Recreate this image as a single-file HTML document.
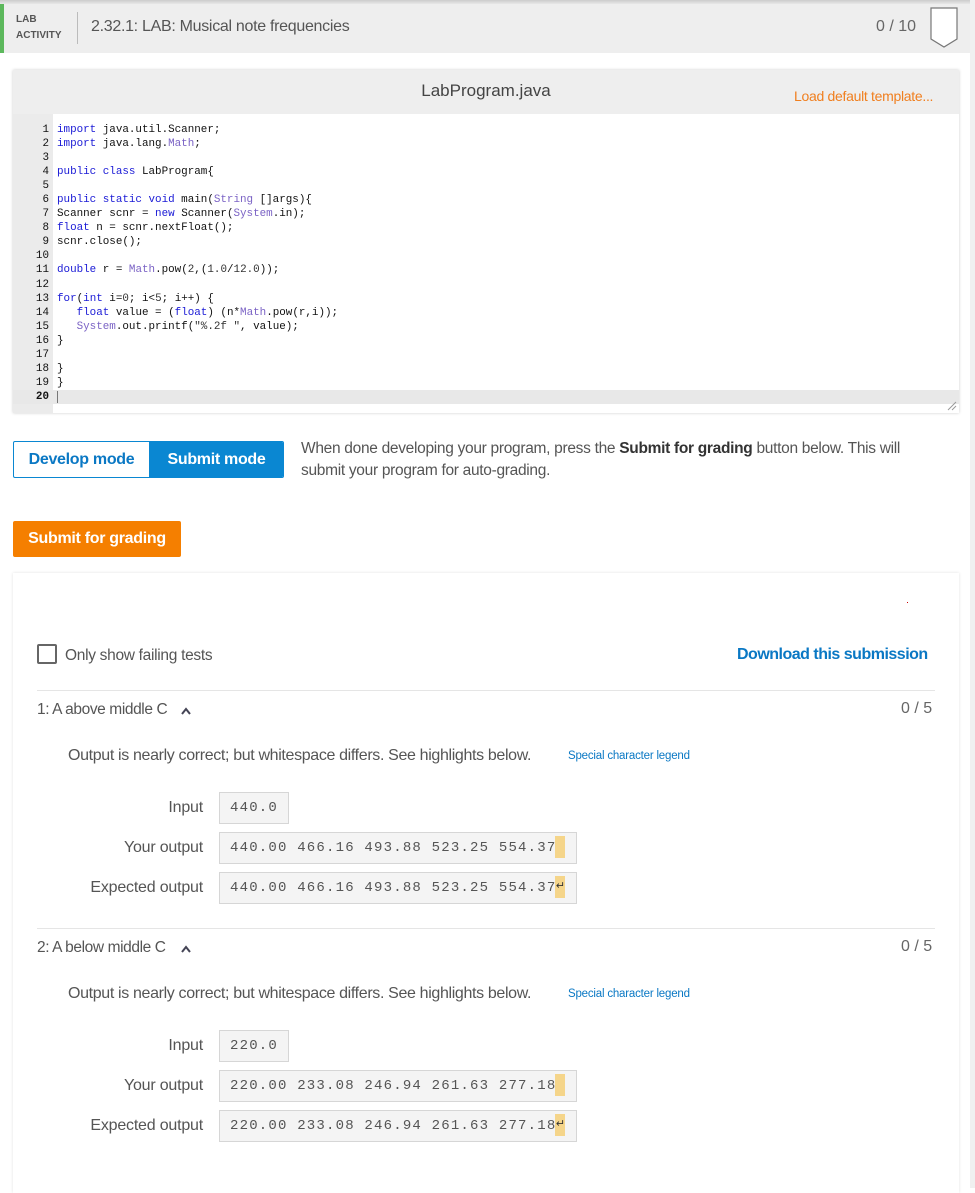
<!DOCTYPE html>
<html><head><meta charset="utf-8"><style>
*{box-sizing:border-box;margin:0;padding:0}
body{width:975px;height:1188px;background:#fff;font-family:"Liberation Sans",sans-serif;color:#444;position:relative;overflow:hidden}
.abs{position:absolute}
.hdr{left:0;top:4px;width:970px;height:49px;background:#eeeeee;border-left:4px solid #5cb85c}
.shadowtop{left:0;top:0;width:975px;height:5px;background:linear-gradient(#ccc,#eee)}
.rstrip{left:970px;top:0;width:5px;height:1188px;background:#f0f0f0}
.code{left:13px;top:70px;width:946px;height:343px;background:#fff;box-shadow:0 0 3px rgba(0,0,0,.2)}
.codehd{left:0;top:0;width:946px;height:44px;background:#eeeeee}
.gut{left:0;top:44px;width:40px;height:299px;background:#ebebeb}
pre{font-family:"Liberation Mono",monospace;font-size:10.9px;line-height:14.05px;color:#111}
.k{color:#1a1ad6}.m{color:#333}.n{color:#7b63c5}
.btn{font-weight:bold;font-size:16px;letter-spacing:-.3px}
.box{position:absolute;background:#f4f4f4;border:1px solid #d6d6d6;font-family:"Liberation Mono",monospace;font-size:14px;letter-spacing:1.2px;color:#555;padding:0 10px;height:32px;line-height:30px;white-space:nowrap}
.lbl{position:absolute;font-size:16px;color:#555;text-align:right;width:170px;letter-spacing:-.2px}
.hl{display:inline-block;background:#f5d58a;width:10px;height:22px;vertical-align:middle;margin-left:-1px;color:#333;font-size:11px;line-height:22px;letter-spacing:0;text-align:center}
</style></head><body>
<div class="abs shadowtop"></div>
<div class="abs rstrip"></div>
<div class="abs hdr">
 <div class="abs" style="left:12px;top:8px;font-size:10px;font-weight:bold;color:#555;line-height:16px">LAB<br>ACTIVITY</div>
 <div class="abs" style="left:73px;top:8px;width:1px;height:32px;background:#bbb"></div>
 <div class="abs" style="left:87px;top:14px;font-size:16px;color:#555;letter-spacing:-.3px">2.32.1: LAB: Musical note frequencies</div>
 <div class="abs" style="left:872px;top:14px;font-size:16px;color:#666">0 / 10</div>
 <svg class="abs" style="left:926px;top:3px" width="46" height="42"><path d="M1 1 H27 V32 L14 40 L1 32 Z" fill="#fff" stroke="#777" stroke-width="1.2"/></svg>
</div>
<div class="abs code">
 <div class="abs codehd"><div class="abs" style="left:0;width:946px;text-align:center;top:11px;font-size:17px;color:#444">LabProgram.java</div>
 <div class="abs" style="left:781px;top:18px;font-size:14px;color:#f07f1f;letter-spacing:-.3px">Load default template...</div></div>
 <div class="abs gut"></div>
 <div class="abs" style="left:0;top:320px;width:946px;height:14px;background:#e8e8e8"></div>
 <div class="abs" style="left:44px;top:321px;width:1px;height:12px;background:#777"></div>
 <pre class="abs" style="left:0;top:53px;width:36px;text-align:right">1
2
3
4
5
6
7
8
9
10
11
12
13
14
15
16
17
18
19
<b>20</b></pre>
 <pre class="abs" style="left:44px;top:53px"><span class="k">import</span> java.util.Scanner;
<span class="k">import</span> java.lang.<span class="n">Math</span>;

<span class="k">public class</span> LabProgram{

<span class="k">public static void</span> main(<span class="n">String</span> []args){
Scanner scnr = <span class="k">new</span> Scanner(<span class="n">System</span>.in);
<span class="k">float</span> n = scnr.nextFloat();
scnr.close();

<span class="k">double</span> r = <span class="n">Math</span>.pow(<span class="m">2</span>,(<span class="m">1.0</span>/<span class="m">12.0</span>));

<span class="k">for</span>(<span class="k">int</span> i=<span class="m">0</span>; i&lt;<span class="m">5</span>; i++) {
   <span class="k">float</span> value = (<span class="k">float</span>) (n*<span class="n">Math</span>.pow(r,i));
   <span class="n">System</span>.out.printf(<span class="m">"%.2f "</span>, value);
}

}
}
</pre>
 <svg class="abs" style="left:934px;top:331px" width="10" height="10"><path d="M9 1 L1 9 M9 5 L5 9" stroke="#999"/></svg>
</div>
<div class="abs" style="left:13px;top:441px;width:271px;height:37px;border:1px solid #0a87d2;border-radius:2px;overflow:hidden">
 <div class="abs btn" style="left:0;top:0;width:135px;height:35px;color:#0a78c4;text-align:center;line-height:35px">Develop mode</div>
 <div class="abs btn" style="left:135px;top:0;width:135px;height:35px;background:#0a87d2;color:#fff;text-align:center;line-height:35px">Submit mode</div>
</div>
<div class="abs" style="left:301px;top:438px;width:630px;font-size:15.5px;line-height:22px;color:#555;letter-spacing:-.3px">When done developing your program, press the <b style="color:#333">Submit for grading</b> button below. This will submit your program for auto-grading.</div>
<div class="abs btn" style="left:13px;top:521px;width:168px;height:36px;background:#f57f00;color:#fff;text-align:center;line-height:36px;border-radius:2px">Submit for grading</div>
<div class="abs" style="left:13px;top:573px;width:946px;height:620px;background:#fff;box-shadow:0 0 3px rgba(0,0,0,.12)"></div>
<div class="abs" style="left:907px;top:602px;width:1px;height:1px;background:#c00"></div>
<div class="abs" style="left:37px;top:644px;width:20px;height:20px;border:2px solid #666;border-radius:2px"></div>
<div class="abs" style="left:65px;top:647px;font-size:15.5px;color:#555;letter-spacing:-.3px">Only show failing tests</div>
<div class="abs" style="left:737px;top:646px;font-size:16px;font-weight:bold;color:#0a78c4;letter-spacing:-.5px">Download this submission</div>

<div class="abs" style="left:37px;top:690px;width:898px;height:1px;background:#e5e5e5"></div>
<div class="abs" style="left:37px;top:701px;font-size:15.5px;color:#555;letter-spacing:-.4px">1: A above middle C</div>
<svg class="abs" style="left:180px;top:706px" width="12" height="10"><path d="M2 8 L6 3 L10 8" fill="none" stroke="#445" stroke-width="2"/></svg>
<div class="abs" style="left:901px;top:700px;font-size:16px;color:#666">0 / 5</div>
<div class="abs" style="left:68px;top:747px;font-size:16px;color:#555;letter-spacing:-.35px">Output is nearly correct; but whitespace differs. See highlights below.</div>
<div class="abs" style="left:568px;top:750px;font-size:11.5px;color:#0a78c4;letter-spacing:-.2px">Special character legend</div>
<div class="lbl" style="left:33px;top:799px">Input</div>
<div class="box" style="left:219px;top:792px;width:70px">440.0</div>
<div class="lbl" style="left:33px;top:839px">Your output</div>
<div class="box" style="left:219px;top:832px;width:358px">440.00 466.16 493.88 523.25 554.37<span class="hl"></span></div>
<div class="lbl" style="left:33px;top:879px">Expected output</div>
<div class="box" style="left:219px;top:872px;width:358px">440.00 466.16 493.88 523.25 554.37<span class="hl">&#8629;</span></div>

<div class="abs" style="left:37px;top:928px;width:898px;height:1px;background:#e5e5e5"></div>
<div class="abs" style="left:37px;top:939px;font-size:15.5px;color:#555;letter-spacing:-.4px">2: A below middle C</div>
<svg class="abs" style="left:180px;top:944px" width="12" height="10"><path d="M2 8 L6 3 L10 8" fill="none" stroke="#445" stroke-width="2"/></svg>
<div class="abs" style="left:901px;top:938px;font-size:16px;color:#666">0 / 5</div>
<div class="abs" style="left:68px;top:985px;font-size:16px;color:#555;letter-spacing:-.35px">Output is nearly correct; but whitespace differs. See highlights below.</div>
<div class="abs" style="left:568px;top:988px;font-size:11.5px;color:#0a78c4;letter-spacing:-.2px">Special character legend</div>
<div class="lbl" style="left:33px;top:1037px">Input</div>
<div class="box" style="left:219px;top:1030px;width:70px">220.0</div>
<div class="lbl" style="left:33px;top:1077px">Your output</div>
<div class="box" style="left:219px;top:1070px;width:358px">220.00 233.08 246.94 261.63 277.18<span class="hl"></span></div>
<div class="lbl" style="left:33px;top:1117px">Expected output</div>
<div class="box" style="left:219px;top:1110px;width:358px">220.00 233.08 246.94 261.63 277.18<span class="hl">&#8629;</span></div>
</body></html>
